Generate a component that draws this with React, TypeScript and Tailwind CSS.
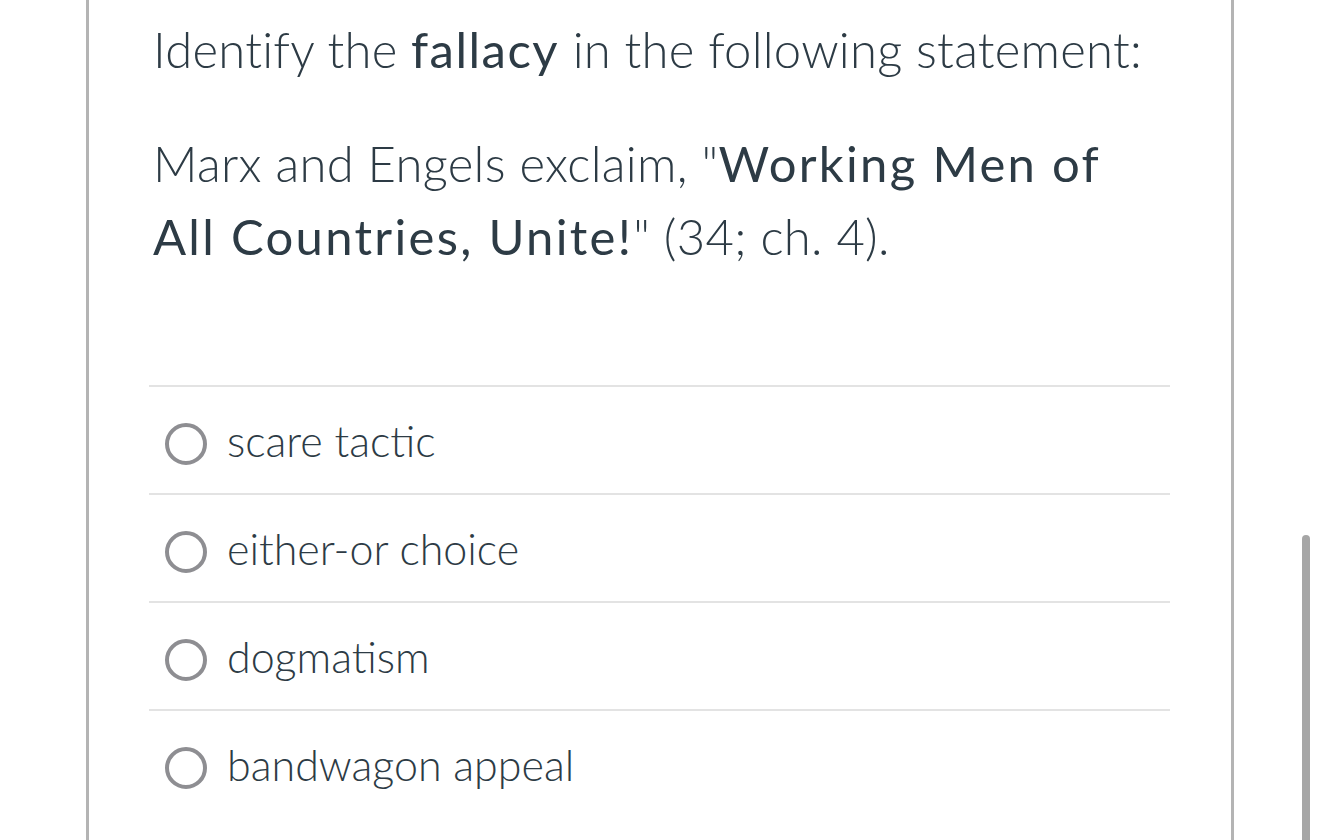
import React from "react";

const options = ["scare tactic", "either-or choice", "dogmatism", "bandwagon appeal"];

const App = () => {
  return (
    <div
      className="relative h-[840px] w-full overflow-hidden bg-white text-[#2d3b45]"
      style={{ fontFamily: "Lato, 'Open Sans', sans-serif" }}
    >
      <div className="ml-[86px] h-full w-[1148px] border-x-[3px] border-[#b4b4b4]">
        <div className="pl-[64px] pr-[61px] pt-[13px]">
          <p className="text-[49px] font-light leading-[72px] tracking-[0.25px]">
            Identify the <strong className="font-normal tracking-[1.5px]">fallacy</strong> in the following statement:
          </p>
          <p className="mt-[42px] text-[49px] font-light leading-[73px] tracking-[0.3px]">
            Marx and Engels exclaim, "<strong className="font-normal tracking-[2.3px]">Working Men of All Countries, Unite!</strong>" (34; ch. 4).
          </p>

          <div className="mt-[112px] -ml-[4px]">
            {options.map((opt) => (
              <div
                key={opt}
                className="flex h-[108px] items-center border-t-2 border-[#e3e3e3] pl-[16px]"
              >
                <span className="mt-[8px] h-[42px] w-[42px] shrink-0 rounded-full border-[4px] border-[#8e8e92]" />
                <span className="ml-[20px] text-[43px] font-light leading-none">{opt}</span>
              </div>
            ))}
          </div>
        </div>
      </div>

      <div className="absolute right-[10px] top-[535px] h-[320px] w-[8px] rounded-full bg-[#a6a6a6]" />
    </div>
  );
};

export default App;
